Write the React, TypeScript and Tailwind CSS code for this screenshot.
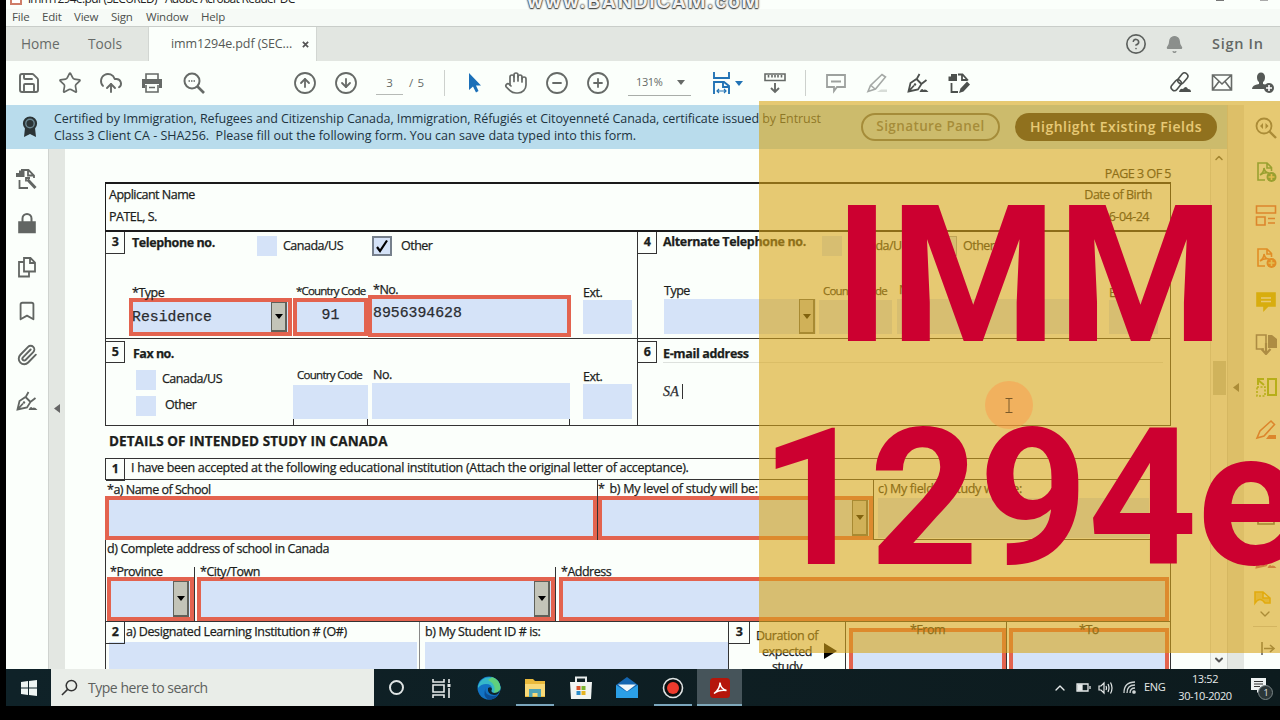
import type { ReactNode } from "react";
import clsx from "clsx";
import {
  Bell,
  Bookmark,
  ChevronDown,
  ChevronUp,
  CircleHelp,
  CircleArrowDown,
  CircleArrowUp,
  CircleMinus,
  CirclePlus,
  CloudUpload,
  Hand,
  Paperclip,
  Save,
  Star,
} from "lucide-react";

type P = { className?: string; children?: ReactNode };

function Svg({ className, children }: P) {
  return (
    <svg
      viewBox="0 0 22 22"
      fill="none"
      stroke="currentColor"
      strokeWidth="1.6"
      className={clsx("size-[22px] shrink-0", className)}
    >
      {children}
    </svg>
  );
}

function PenIcon({ className }: P) {
  return (
    <Svg className={className}>
      <path d="M1.500 19.500 L3.500 11 L9.500 7 L14.500 12 L11 17.500 Z M2 19 L7 13.500 M10 6.500 L12.500 2 M15 11.500 L19.500 8" strokeWidth="1.800" />
      <circle cx="8" cy="12.500" r="1.200" fill="currentColor" stroke="none" />
      <path d="M12.500 20 q2 -5 4 -2 q2 -1.500 5 2 z" fill="currentColor" stroke="none" />
    </Svg>
  );
}

function ConvertIcon({ className }: P) {
  return (
    <Svg className={className}>
      <path d="M0.500 9 V4.500 H3 V2 H9 V9 Z" fill="currentColor" stroke="none" />
      <path d="M10 2.500 H14.500 L20 8.500 M14 3 V8 H19 M3.500 11 V20 H10" strokeWidth="1.800" />
      <path d="M11 21 L12.500 16.500 L19 9.500 L22 12.500 L15.500 19.500 Z" fill="currentColor" stroke="none" />
    </Svg>
  );
}

// export icon of the left rail, the wrench points down to the right
function ExportIcon() {
  return (
    <Svg>
      <path d="M0 9 V5 H3 V2.500 H8.500 V9 Z" fill="currentColor" stroke="none" />
      <path d="M5 2 H12.500 L18 7.500 V10 M12 2 V7.500 H18 M3.500 12 V20 H12" strokeWidth="1.800" />
      <path d="M11.500 11.500 L19.500 20" strokeWidth="3" />
      <path d="M10 13.500 V10 H14" strokeWidth="1.800" />
    </Svg>
  );
}

function DocPlusIcon({ className }: P) {
  return (
    <Svg className={className}>
      <path d="M10 19 H3 V2 H12 L16.500 6.500 V10 M12 2 V7 H16 M5 14 q4 -3 4 -7 q1 5 5 5 q-5 -1 -9 2" />
      <circle cx="16.500" cy="16" r="5" fill="currentColor" stroke="none" />
      <path d="M16.500 13 V19 M13.500 16 H19.500" className="stroke-[#f4e0a0]" />
    </Svg>
  );
}

function Caret({ className }: P) {
  return (
    <svg viewBox="0 0 8 5" className={clsx("h-[5px] w-2 shrink-0", className)} fill="currentColor">
      <path d="M0 0 H8 L4 5 Z" />
    </svg>
  );
}

const MENU = [
  ["File", "w-[30px]"],
  ["Edit", "w-8"],
  ["View", "w-[37px]"],
  ["Sign", "w-[35px]"],
  ["Window", "w-[55px]"],
  ["Help", "w-8"],
];

function TitleBar() {
  return (
    <div className="h-[27px] shrink-0 overflow-hidden border-b border-[#c9cdc9] bg-[#f6faf6]">
      <div className="flex h-[9px] items-end justify-between bg-[#fbfffb]">
        <div className="flex items-center pb-0.5 pl-1">
          <span className="mr-1.5 h-3 w-3 border-2 border-[#cf7d68] bg-white" />
          <span className="text-[12px] leading-[16px] tracking-[-0.68px] whitespace-nowrap text-[#222]">
            imm1294e.pdf (SECURED) - Adobe Acrobat Reader DC
          </span>
        </div>
        <div className="flex items-start gap-9 pr-3 pb-2 text-[#777]">
          <span className="h-px w-2 bg-[#777]" />
          <span className="h-px w-2 bg-[#aaa]" />
        </div>
      </div>
      <div className="flex pl-1.5 text-[11.500px] leading-[16px] text-[#4c504d]">
        {MENU.map(([label, w]) => (
          <span key={label} className={clsx(w, "shrink-0 tracking-[-0.2px]")}>
            {label}
          </span>
        ))}
      </div>
    </div>
  );
}

function TabBar() {
  return (
    <div className="flex h-[34px] shrink-0 items-center bg-[#e2e6e1] text-[13.700px] text-[#676b68]">
      <span className="ml-[15px] w-[67px]">Home</span>
      <span className="w-[60px]">Tools</span>
      <div className="flex h-full w-[169px] items-center border-x border-[#d2d6d2] bg-[#fbfffb] pl-[22px] text-[12.500px] text-[#555956]">
        <span className="w-[131px] tracking-[-0.1px] whitespace-nowrap">imm1294e.pdf (SEC...</span>
        <svg viewBox="0 0 8 8" className="size-[7px] stroke-[#555]" strokeWidth="2">
          <path d="M1 1 L7 7 M7 1 L1 7" />
        </svg>
      </div>
      <CircleHelp className="ml-auto size-[22px] text-[#5c605d]" strokeWidth={1.8} />
      <Bell className="ml-[18px] size-[19px] fill-[#8b8f8c] text-[#8b8f8c]" strokeWidth={1.6} />
      <span className="mr-[15px] ml-7 w-[53px] text-[14.500px] font-semibold tracking-[0.7px] whitespace-nowrap text-[#636764]">Sign In</span>
    </div>
  );
}

function Toolbar() {
  const lu = "size-[24px] -mx-px shrink-0";
  return (
    <div className="flex h-11 shrink-0 items-center bg-[#fbfffb] text-[#666a67]">
      <Save className={clsx(lu, "ml-[11px]")} strokeWidth={1.9} />
      <Star className={clsx(lu, "ml-[18px]")} strokeWidth={1.7} />
      <CloudUpload className={clsx(lu, "ml-[18px]")} strokeWidth={1.9} />
      <Svg className="ml-[19px]">
        <path d="M5 7 V2 H17 V7" />
        <path d="M1 7 H21 V16 H18 V12 H4 V16 H1 Z" fill="currentColor" stroke="none" />
        <path d="M5 13 V20 H17 V13 M8 15.500 H14" />
      </Svg>
      <Svg className="ml-5">
        <circle cx="9" cy="9" r="7.500" strokeWidth="2" />
        <path d="M14 14 L21 21" strokeWidth="2.600" />
        <path d="M5.500 9 H12.500" strokeDasharray="1.500 1" />
      </Svg>
      <CircleArrowUp className={clsx(lu, "ml-[88px]")} strokeWidth={1.8} />
      <CircleArrowDown className={clsx(lu, "ml-[18px]")} strokeWidth={1.8} />
      <span className="ml-[19px] h-6 w-[27px] border-b border-[#b6bab6] text-center text-[11.500px] leading-6">3</span>
      <span className="ml-1.5 w-[17px] text-[11.500px] tracking-[0.7px] whitespace-nowrap">/ 5</span>
      <span className="ml-[18px] h-[26px] w-px bg-[#cdd1cd]" />
      <Svg className="ml-[18px] text-[#1b6fb8]">
        <path d="M6 1 V18 L10 14.500 L13 20.500 L15.500 19 L13 13.500 H18 Z" fill="currentColor" stroke="none" />
      </Svg>
      <Hand className={clsx(lu, "ml-[19px]")} strokeWidth={1.7} />
      <CircleMinus className={clsx(lu, "ml-[18px]")} strokeWidth={1.8} />
      <CirclePlus className={clsx(lu, "ml-[18px]")} strokeWidth={1.8} />
      <div className="ml-[19px] flex h-[25px] w-[63px] items-center border-b border-[#a9ada9] pl-2 text-[11px]">
        <span className="w-[41px] tracking-[-0.4px]">131%</span>
        <Caret />
      </div>
      <Svg className="ml-5 text-[#2273b5]">
        <path d="M3 0 V6 H18 V0 M3 22 V10 H13 L18 14 V22 M12 11 V15 H17" strokeWidth="1.900" />
        <path d="M6 19 H15 M8 17 L6 19 L8 21 M13 17 L15 19 L13 21" strokeWidth="1.200" />
      </Svg>
      <Caret className="ml-0.5 text-[#2273b5]" />
      <Svg className="ml-[21px]">
        <path d="M1 2 H21 V8.500 H1 Z M4.500 3 V5.500 M8 3 V5.500 M11 3 V5.500 M14 3 V5.500 M17.500 3 V5.500" />
        <path d="M11 11 V19 M7 16 L11 20 L15 16" strokeWidth="1.900" />
      </Svg>
      <span className="ml-[19px] h-[26px] w-px bg-[#cdd1cd]" />
      <Svg className="ml-[19px] text-[#9da19e]">
        <path d="M2 3 H20 V15 H12 L9 19 V15 H2 Z M6 9.500 H16" strokeWidth="1.800" />
      </Svg>
      <Svg className="ml-[19px] text-[#a5a9a6]">
        <path d="M2 19.500 L4.500 13.500 L16 2.500 L19.500 5 L9.500 17 Z M5 13.500 L9 17" />
        <path d="M11 20 L15 17.500 H21 V20 Z" fill="currentColor" stroke="none" opacity=".4" />
      </Svg>
      <PenIcon className="ml-[19px] text-[#4c504d]" />
      <ConvertIcon className="ml-[19px] text-[#4c504d]" />
      <Svg className="ml-[199px] text-[#4c504d]">
        <rect x="1" y="10" width="12" height="6.500" rx="3.200" transform="rotate(-50 7 13)" />
        <rect x="8" y="3" width="12" height="6.500" rx="3.200" transform="rotate(-50 14 6.500)" />
        <path d="M10 20 q1 -4 4 -3 q3 -4 5 0 q3 0 3 3 z" fill="currentColor" stroke="none" />
      </Svg>
      <Svg className="ml-5">
        <path d="M1.500 3 H20.500 V18 H1.500 Z L11 12 L20.500 3 M1.500 18 L8 9.500 M20.500 18 L14 9.500" />
      </Svg>
      <Svg className="ml-[19px] text-[#555956]">
        <path d="M5 5 a4 4.500 0 0 1 8 0 q0 4 -2 5 v2 l4 1 v4 H0 q0 -4 7 -5 v-2 q-2 -1 -2 -5" fill="currentColor" stroke="none" />
        <circle cx="17" cy="16" r="5" fill="currentColor" stroke="none" />
        <path d="M17 13 V19 M14 16 H20" stroke="#fff" />
      </Svg>
    </div>
  );
}

function Banner() {
  return (
    <div className="flex h-11 shrink-0 items-center bg-[#b9dcec] text-[#1d333e]">
      <svg viewBox="0 0 16 22" className="ml-4 h-[22px] w-4 shrink-0">
        <path d="M3 12 L2 21 L8 18 L14 21 L13 12 Z" fill="#2b3436" />
        <circle cx="8" cy="7.500" r="6" fill="#6c8791" stroke="#2b3436" strokeWidth="2.200" />
        <circle cx="8" cy="7.500" r="3.500" fill="#2b3436" />
      </svg>
      <div className="ml-4 w-[800px] shrink-0 text-[12.500px] leading-[17.500px] whitespace-pre">
        <p className="tracking-[-0.08px]">
          Certified by Immigration, Refugees and Citizenship Canada, Immigration, Réfugiés et Citoyenneté Canada, certificate issued by Entrust
        </p>
        <p>
          Class 3 Client CA - SHA256.{"  "}Please fill out the following form. You can save data typed into this form.
        </p>
      </div>
      <button className="ml-[7px] h-7 w-[139px] shrink-0 rounded-full border-2 border-[#59686d] pb-0.5 text-[13.500px] leading-[22px] font-semibold tracking-[0.4px] whitespace-nowrap text-[#59686d]">
        Signature Panel
      </button>
      <button className="ml-[15px] h-7 w-[202px] shrink-0 rounded-full bg-[#24242a] pb-0.5 text-[14px] font-semibold tracking-[0.5px] whitespace-nowrap text-white">
        Highlight Existing Fields
      </button>
    </div>
  );
}

function LeftRail() {
  return (
    <div className="flex w-[42px] shrink-0 flex-col items-center gap-[22px] bg-[#fbfffb] pt-[19px] text-[#626663]">
      <ExportIcon />
      <Svg>
        <path d="M3 10 H19 V20.500 H3 Z" fill="currentColor" />
        <path d="M6.500 10 V6.500 a4.500 4.500 0 0 1 9 0 V10" strokeWidth="2" />
      </Svg>
      <Svg>
        <path d="M8 2 H14.500 L19 6.500 V15.500 H8 Z M14 2 V7 H19 M8 6 H3 V20.500 H13 V16" strokeWidth="1.800" />
      </Svg>
      <Bookmark className="size-[22px]" strokeWidth={2} />
      <Paperclip className="size-[22px]" strokeWidth={2.1} />
      <PenIcon className="mt-0.5" />
    </div>
  );
}

function Num({ children, className }: P) {
  return (
    <div className={clsx("h-[22px] w-[19px] shrink-0 border-r border-b border-[#333] text-center text-[12.500px] leading-[20px] font-bold", className)}>
      {children}
    </div>
  );
}

function Field({ className, children, required, select }: P & { required?: boolean; select?: boolean }) {
  return (
    <div
      className={clsx(
        "flex shrink-0 items-center overflow-hidden bg-[#d5e3f8] font-['Liberation_Mono',monospace] text-[14.800px] tracking-normal whitespace-nowrap text-[#2a2c30]",
        required && "border-4 border-[#e3634f]",
        className,
      )}
    >
      {children}
      {select && (
        <span className="mr-px ml-auto flex h-full w-4 shrink-0 items-center justify-center border border-r-2 border-b-2 border-[#5f615a] bg-[#c3c4b8]">
          <Caret className="text-black" />
        </span>
      )}
    </div>
  );
}

function Check({ checked, className }: P & { checked?: boolean }) {
  return (
    <span className={clsx("flex size-5 shrink-0 items-center justify-center bg-[#d5e3f8]", checked && "border-2 border-[#76808c]", className)}>
      {checked && (
        <svg viewBox="0 0 14 14" className="size-3.5" fill="none" stroke="#000" strokeWidth="2.200">
          <path d="M2 8 L5 12 L12 1.500" />
        </svg>
      )}
    </span>
  );
}

function Telephone() {
  return (
    <div className="flex h-[107px] border-r border-b border-[#333]">
      <div className="flex w-[532px] shrink-0 flex-col border-l border-[#333]">
        <div className="flex h-6">
          <Num>3</Num>
          <b className="ml-[7px] w-[125px] leading-[21px] tracking-[-0.4px]">Telephone no.</b>
          <Check className="mt-1" />
          <span className="ml-1.5 w-[89px] leading-[27px]">Canada/US</span>
          <Check checked className="mt-1" />
          <span className="ml-[9px] leading-[27px]">Other</span>
        </div>
        <div className="mt-auto flex items-end pl-[23px]">
          <div className="mb-[2px] w-[164px]">
            <p className="pl-[3px] leading-[11px]">*Type</p>
            <Field required select className="h-[38px] w-[163px]">
              <span className="-ml-px">Residence</span>
            </Field>
          </div>
          <div className="mb-[2px] w-[75px]">
            <p className="pl-[3px] text-[11.500px] leading-[14px] tracking-[-0.8px]">*Country Code</p>
            <Field required className="h-[38px] justify-center">
              <span className="mb-[3px]">91</span>
            </Field>
          </div>
          <div className="mb-px w-[215px]">
            <p className="pl-[5px] leading-[11px]">*No.</p>
            <Field required className="h-[42px] w-[203px]">
              <span className="mb-1.5 ml-px">8956394628</span>
            </Field>
          </div>
          <div className="mb-1 w-[49px]">
            <p className="leading-[14px]">Ext.</p>
            <Field className="h-[34px]" />
          </div>
        </div>
      </div>
      <div className="flex w-[533px] shrink-0 flex-col border-l border-[#333]">
        <div className="flex h-6">
          <Num className="w-5">4</Num>
          <b className="ml-1.5 w-[159px] leading-[20px] tracking-[-0.34px]">Alternate Telephone no.</b>
          <Check className="mt-1" />
          <span className="ml-1.5 w-[89px] leading-[27px]">Canada/US</span>
          <Check className="mt-1 border border-[#98a4b4]" />
          <span className="ml-1.5 leading-[27px]">Other</span>
        </div>
        <div className="mt-auto mb-1 flex items-end pl-[26px]">
          <div className="w-[155px]">
            <p className="leading-[16px]">Type</p>
            <Field select className="h-[35px] w-[152px]" />
          </div>
          <div className="w-[78px]">
            <p className="pl-1 text-[11.500px] leading-[18px] tracking-[-0.8px]">Country Code</p>
            <Field className="h-[34px] w-[73px]" />
          </div>
          <div className="w-[212px]">
            <p className="pl-0.5 leading-[18px]">No.</p>
            <Field className="h-[35px] w-[198px]" />
          </div>
          <div className="w-[49px]">
            <p className="leading-[15px]">Ext.</p>
            <Field className="h-[34px]" />
          </div>
        </div>
      </div>
    </div>
  );
}

function FaxEmail() {
  return (
    <div className="flex h-[87px] border-r border-b border-[#333]">
      <div className="flex w-[532px] shrink-0 border-l border-[#333]">
        <Num className="mt-0.5 border-t">5</Num>
        <div className="w-[168px]">
          <b className="block pl-2 leading-[29px]">Fax no.</b>
          <div className="mt-0.5 flex pl-[11px]">
            <Check />
            <span className="ml-1.5 leading-[17px]">Canada/US</span>
          </div>
          <div className="mt-1.5 flex pl-[11px]">
            <Check />
            <span className="ml-[9px] leading-[18px]">Other</span>
          </div>
        </div>
        <div className="flex items-end">
          <div className="w-[79px]">
            <p className="pl-1 text-[11.500px] leading-[20px] tracking-[-0.7px]">Country Code</p>
            <Field className="h-[34px] w-[75px]" />
            <div className="h-[6px] w-[75px] border-x border-[#333]" />
          </div>
          <div className="w-[211px]">
            <p className="pl-px leading-[16px]">No.</p>
            <Field className="h-[36px] w-[198px]" />
            <div className="h-[6px] w-[198px] border-r border-[#333]" />
          </div>
          <div className="mb-1.5 w-[49px]">
            <p className="leading-[15px]">Ext.</p>
            <Field className="h-[35px]" />
          </div>
        </div>
      </div>
      <div className="flex w-[533px] shrink-0 border-l border-[#333]">
        <Num className="mt-0.5 w-5 border-t">6</Num>
        <div className="ml-1.5 w-[500px]">
          <b className="block h-[24px] border-b border-[#dde1dd] leading-[29px] tracking-[-0.35px]">E-mail address</b>
          <div className="mt-[21px] flex w-[20px] border-r border-[#333] font-['Liberation_Serif',serif] text-[14px] leading-[15px] tracking-[0.3px] text-[#2a2c30] italic">
            SA
          </div>
        </div>
      </div>
    </div>
  );
}

function Study() {
  return (
    <>
      <h2 className="h-8 pl-1 text-[13.500px] leading-[31px] font-bold tracking-[0.07px]">DETAILS OF INTENDED STUDY IN CANADA</h2>
      <div className="flex h-[22px] border border-[#333]">
        <Num className="h-[21px] leading-[17px]">1</Num>
        <span className="ml-1.5 leading-[17px] tracking-[-0.3px]">
          I have been accepted at the following educational institution (Attach the original letter of acceptance).
        </span>
      </div>
      <div className="flex h-[60px] border-r border-[#333]">
        <div className="w-[492px] shrink-0">
          <p className="h-4 pl-0.5 leading-[19px]">*a) Name of School</p>
          <Field required className="h-11" />
        </div>
        <div className="w-[276px] shrink-0 border-l border-[#333]">
          <p className="h-4 leading-[17px]">
            *<span className="ml-[5px] tracking-[-0.25px]">b) My level of study will be:</span>
          </p>
          <Field required select className="h-11" />
        </div>
        <div className="grow border-b border-l border-[#333]">
          <p className="h-[18px] pl-1 leading-[17px] tracking-[-0.3px]">c) My field of study will be:</p>
          <Field className="ml-1 h-10 w-[271px]" />
        </div>
      </div>
      <div className="h-[82px] border-r border-b border-l border-[#333]">
        <p className="h-[27px] pl-px leading-[17px] tracking-[-0.4px]">d) Complete address of school in Canada</p>
        <div className="flex h-[54px]">
          <div className="w-[89px] shrink-0 border-r border-[#333] pl-px">
            <p className="h-[10px] pl-[3px] leading-[10px]">*Province</p>
            <Field required select className="h-11" />
          </div>
          <div className="w-[361px] shrink-0 border-r border-[#333] pl-0.5">
            <p className="h-[10px] pl-[3px] leading-[10px]">*City/Town</p>
            <Field required select className="h-11" />
          </div>
          <div className="w-[613px] shrink-0 pl-[3px]">
            <p className="h-[10px] pl-0.5 leading-[10px]">*Address</p>
            <Field required className="h-11" />
          </div>
        </div>
      </div>
      <div className="flex h-[47px] overflow-hidden border-r border-l border-[#333]">
        <div className="w-[314px] shrink-0 border-r border-[#888]">
          <div className="flex h-5">
            <Num>2</Num>
            <span className="ml-px leading-[19px] tracking-[-0.38px]">a) Designated Learning Institution # (O#)</span>
          </div>
          <Field className="ml-[3px] h-[27px] w-[308px]" />
        </div>
        <div className="w-[309px] shrink-0 border-r border-[#333] pl-[5px]">
          <p className="h-5 leading-[19px] tracking-[-0.38px]">b) My Student ID # is:</p>
          <Field className="h-[27px]" />
        </div>
        <div className="flex w-[117px] shrink-0 border-r border-[#333]">
          <Num className="h-[21px] w-[21px]">3</Num>
          <p className="mt-[6px] ml-[3px] w-[68px] shrink-0 text-center leading-[15.500px] tracking-[-0.4px]">
            Duration of
            <br />
            expected
            <br />
            study
          </p>
          <svg viewBox="0 0 13 16" className="mt-[21px] ml-[3px] h-4 w-[13px] shrink-0">
            <path d="M0 0 L13 8 L0 16 Z" />
          </svg>
        </div>
        <div className="w-[161px] shrink-0 border-r border-[#333] pl-[3px]">
          <p className="h-1.5 text-center leading-[16px]">*From</p>
          <Field required className="h-[50px]" />
        </div>
        <div className="grow pr-px pl-0.5">
          <p className="h-1.5 text-center leading-[16px]">*To</p>
          <Field required className="h-[50px]" />
        </div>
      </div>
    </>
  );
}

function Document() {
  return (
    <div className="w-[1145px] shrink-0 overflow-hidden bg-[#fbfffb] pl-10 text-[12.500px] tracking-[-0.5px] whitespace-nowrap text-[#1c1e1c] [-webkit-text-stroke:0.25px]">
      <div className="w-[1066px]">
        <p className="h-[33px] pt-[17px] text-right leading-[16px]">PAGE 3 OF 5</p>
        <div className="flex h-[50px] justify-between border-x border-y-2 border-[#1a1a1a] px-[3px] leading-[22px]">
          <div>
            <p>Applicant Name</p>
            <p>PATEL, S.</p>
          </div>
          <div className="mr-[15px] text-right">
            <p>Date of Birth</p>
            <p className="pr-[3px]">1986-04-24</p>
          </div>
        </div>
        <Telephone />
        <FaxEmail />
        <Study />
      </div>
    </div>
  );
}

function ScrollBar() {
  return (
    <div className="flex w-[17px] shrink-0 flex-col items-center justify-between border-l border-[#d9ddd9] bg-[#f4f8f4] py-[3px] text-[#555]">
      <ChevronUp className="size-3" strokeWidth={3} />
      <span className="mt-[52px] h-[34px] w-[13px] bg-[#c4c8c4]" />
      <ChevronDown className="mt-[114px] size-3" strokeWidth={4} />
    </div>
  );
}

function RightRail() {
  return (
    <div className="flex w-9 shrink-0 flex-col items-end gap-[21px] bg-[#fbfffb] pt-3 pr-[3px]">
      <Svg className="text-[#666]">
        <circle cx="9" cy="9" r="7.500" strokeWidth="1.800" />
        <path d="M14.500 14.500 L21 21" strokeWidth="2.400" />
        <path d="M8 6 L5 9 L8 12 Z M10.500 6 L13.500 9 L10.500 12 Z" fill="currentColor" stroke="none" />
      </Svg>
      <DocPlusIcon className="mt-px text-[#3d9a55]" />
      <Svg className="text-[#e2574c]">
        <path d="M1.500 2 H20.500 V9 H1.500 Z M1.500 13 H10 V21 H1.500 Z M13 14.500 H20 M13 19 H20" />
      </Svg>
      <DocPlusIcon className="text-[#ee6a3a]" />
      <Svg className="text-[#d6b800]">
        <path d="M2 3 H20 V16 H13 L9 20 V16 H2 Z" fill="currentColor" />
        <path d="M6 8 H16 M6 11.500 H16" stroke="#fff" />
      </Svg>
      <Svg className="text-[#6b6684]">
        <path d="M9 16 H1.500 V2 H11 V10" />
        <path d="M13 2 H17 L22 6 V15 H13 Z" fill="currentColor" stroke="none" />
        <path d="M11 10 V20 M6.500 16 L11 21 L15.500 16" strokeWidth="2.200" />
      </Svg>
      <Svg className="text-[#86bc1c]">
        <path d="M13 3 H21 V19 H13 Z M3 4 L9 9 M3 9 V3 H9" strokeWidth="2" />
        <path d="M2 11 H10 V20 H2 Z" strokeDasharray="2 1.500" />
      </Svg>
      <Svg className="text-[#e2574c]">
        <path d="M2 19 L5 12 L16 2 L19.500 5.500 L9 17 Z" />
        <path d="M11 20 L14 16 H21 V20 Z" fill="currentColor" stroke="none" />
      </Svg>
      <Svg className="text-[#666]" />
      <Svg className="text-[#555]">
        <path d="M3 5 H19 V19 H3 Z" />
      </Svg>
      <PenIcon className="text-[#c0507a]" />
      <div className="-mt-[3px] flex flex-col items-center">
        <Svg className="text-[#f0b400]">
          <path d="M1 4 H9 L16 10 V15 H11 Q6 8 1 15 Z M9 4 V10 H16" fill="currentColor" fillOpacity=".6" />
        </Svg>
        <ChevronDown className="-mt-1 size-4 text-[#666]" />
        <span className="mt-1 h-px w-6 bg-[#ccc]" />
        <Svg className="mt-2.5 text-[#666]">
          <path d="M8 5 V18 M10 11.500 H20 M16 8 L20 11.500 L16 15" />
        </Svg>
      </div>
    </div>
  );
}

function Taskbar() {
  return (
    <div className="flex h-[37px] shrink-0 items-center bg-gradient-to-r from-[#0f2228] to-[#0d1b1e] text-[#e6eaea]">
      <div className="flex w-[45px] justify-center">
        <svg viewBox="0 0 16 16" className="size-4" fill="#eef4f2">
          <path d="M0 2 L7 1 V7.500 H0 Z M8 1 L16 0 V7.500 H8 Z M0 8.500 H7 V15 L0 14 Z M8 8.500 H16 V16 L8 15 Z" />
        </svg>
      </div>
      <div className="flex h-full w-[323px] items-center bg-[#e9ede8] pl-2.5 text-[#5d615e]">
        <svg viewBox="0 0 18 18" className="size-[17px]" fill="none" stroke="#333" strokeWidth="1.600">
          <circle cx="11" cy="7" r="5.500" />
          <path d="M7 11 L1 17" />
        </svg>
        <span className="ml-2.5 text-[14px] tracking-[-0.48px]">Type here to search</span>
      </div>
      <div className="flex h-full [&>div]:flex [&>div]:items-center [&>div]:justify-center">
        <div className="w-11">
          <span className="size-[15px] rounded-full border-[2.500px] border-[#dfe4e4]" />
        </div>
        <div className="w-[46px]">
          <Svg className="size-[18px]">
            <path d="M3 2 V5 H14 V2 M3 8 H14 V15 H3 Z M3 21 V18 H14 V21 M19 2 V6 M19 11 V21" />
            <path d="M17.500 7 H20.500 V10 H17.500 Z" fill="currentColor" stroke="none" />
          </Svg>
        </div>
        <div className="w-[50px]">
          <svg viewBox="0 0 24 24" className="size-6">
            <circle cx="12" cy="12" r="11.500" fill="#1273c4" />
            <path d="M1 10 A11.500 11.500 0 0 1 23.500 11 Q24 17 17 17 Q13 16 15 13 Q15 8 9 8 Q4 8 1 12 Z" fill="#35b8c9" />
            <path d="M15 1 A11.500 11.500 0 0 1 23.500 12 Q22 17 17 17 Q20 9 11 4 Z" fill="#5fd07d" />
            <path d="M9 11 Q6 19 16 20 Q20 20 22 18 Q18 24 11 23.500 Q5 20 9 11" fill="#0c4f96" />
            <path d="M15 13 Q13 16 17 17 Q21 17 23 14 Q22 19 17 19 Q10 18 11 12 Q14 10 15 13" fill="#10242b" />
          </svg>
        </div>
        <div className="ml-0.5 w-[38px] border-b-2 border-[#7aa6bd] pt-0.5">
          <svg viewBox="0 0 22 20" className="h-5 w-[22px]">
            <path d="M1 1 H9 L11 3 H21 V19 H1 Z" fill="#e9b93b" />
            <path d="M1 6 H21 V18 H1 Z" fill="#f8d978" />
            <path d="M5 19 V11 H17 V19 H13.500 V15 H8.500 V19 Z" fill="#4fa3b5" />
          </svg>
        </div>
        <div className="ml-1 w-[46px]">
          <svg viewBox="0 0 24 24" className="size-6">
            <path d="M7 6 V1.500 H17 V6" fill="none" stroke="#e8ecec" strokeWidth="2" />
            <path d="M1 6 H23 L22 23 H2 Z" fill="#f1f4f2" />
            <path d="M7.500 10 H11.500 V14 H7.500 Z" fill="#d9532c" />
            <path d="M12.500 10 H16.500 V14 H12.500 Z" fill="#7cb42f" />
            <path d="M7.500 15 H11.500 V19 H7.500 Z" fill="#2a8cc9" />
            <path d="M12.500 15 H16.500 V19 H12.500 Z" fill="#e6b422" />
          </svg>
        </div>
        <div className="w-[46px]">
          <svg viewBox="0 0 24 22" className="h-[22px] w-6">
            <path d="M1 8 L12 0 L23 8 V21 H1 Z" fill="#1566b0" />
            <path d="M1 8 L12 15 L23 8 V21 H1 Z" fill="#2b9fe6" />
            <path d="M3 7.500 H21 L12 14.500 Z" fill="#f2f8fa" />
          </svg>
        </div>
        <div className="ml-1 w-[38px] border-b-2 border-[#7aa6bd] pt-0.5">
          <svg viewBox="0 0 22 22" className="size-[22px]">
            <circle cx="11" cy="11" r="9.500" fill="#0b0f10" stroke="#e0e4e4" strokeWidth="1.600" />
            <circle cx="11" cy="11" r="6" fill="#ef3b2d" />
          </svg>
        </div>
        <div className="ml-[5px] w-[45px] border-b-2 border-[#7fa8ba] bg-[#46545a] pt-0.5">
          <svg viewBox="0 0 20 20" className="size-5">
            <rect width="20" height="20" rx="3.500" fill="#b5160b" />
            <path d="M4 15.500 Q10 11 10 4.500 Q10.500 11 16.500 12.500 Q9 11.500 4 15.500 Z" fill="none" stroke="#fff" strokeWidth="1.500" />
          </svg>
        </div>
      </div>
      <div className="mr-[7px] ml-auto flex items-center text-[12px]">
        <ChevronUp className="size-4" strokeWidth={2} />
        <svg viewBox="0 0 15 9" className="ml-2 h-[9px] w-[15px]" fill="none" stroke="#e6eaea" strokeWidth="1.300">
          <path d="M1 1 H12 V8 H1 Z M14 3 V6" />
          <path d="M2 2 H6 V7 H2 Z" fill="#e6eaea" />
        </svg>
        <svg viewBox="0 0 16 14" className="ml-[7px] h-3.5 w-4" fill="none" stroke="#e6eaea" strokeWidth="1.200">
          <path d="M1 5 H3 L6 2 V12 L3 9 H1 Z M8 5 Q9 7 8 9 M10 3 Q12 7 10 11 M12.500 1.500 Q15.500 7 12.500 12.500" />
        </svg>
        <svg viewBox="0 0 13 13" className="ml-[9px] size-[13px]" fill="none" stroke="#cdd3d3" strokeWidth="1.300">
          <path d="M1 12 Q1 1 12 1 M4 12 Q4 4 12 4 M7 12 Q7 7 12 7" />
          <circle cx="11" cy="11" r="1.200" fill="#e6eaea" />
        </svg>
        <span className="ml-2 w-6 text-[11px] tracking-[-0.3px]">ENG</span>
        <div className="ml-2 w-[58px] text-center text-[11px] leading-[16.500px] tracking-[-0.4px]">
          <p>13:52</p>
          <p>30-10-2020</p>
        </div>
        <svg viewBox="0 0 22 24" className="ml-[17px] h-6 w-[22px]">
          <path d="M0 2 H15 V14 H9 L6 17 V14 H0 Z" fill="#eef2f2" />
          <path d="M3 5.500 H12 M3 8 H12 M3 10.500 H9" stroke="#333" />
          <circle cx="14.500" cy="16.500" r="7" fill="#2c3638" stroke="#7b8688" />
          <text x="12.500" y="20" fontSize="9" fill="#e6eaea">
            1
          </text>
        </svg>
      </div>
    </div>
  );
}

function Splitter({ className, children }: P) {
  return <div className={clsx("flex w-[17px] shrink-0 justify-center border-l border-[#cfd3cf] bg-[#e3e7e2] text-[#666]", className)}>{children}</div>;
}

const collapse = (
  <svg viewBox="0 0 6 9" className="h-[9px] w-1.5" fill="currentColor">
    <path d="M6 0 V9 L0 4.500 Z" />
  </svg>
);

export default function App() {
  return (
    <div className="relative flex h-[720px] w-[1280px] flex-col overflow-hidden bg-black pl-1.5 font-['Open_Sans','Noto_Sans',sans-serif]">
      <TitleBar />
      <TabBar />
      <Toolbar />
      <div className="flex h-[564px] shrink-0">
        <div className="flex w-[1221px] shrink-0 flex-col">
          <Banner />
          <div className="flex h-[520px]">
            <LeftRail />
            <Splitter className="pt-[255px]">{collapse}</Splitter>
            <Document />
            <ScrollBar />
          </div>
        </div>
        <Splitter className="pt-[278px]">{collapse}</Splitter>
        <RightRail />
      </div>
      <Taskbar />

      {/* screen recorder watermark */}
      <p className="absolute top-[-9px] left-[527px] w-[240px] font-['Inter',sans-serif] text-[19px] leading-[22px] font-bold tracking-[1.75px] whitespace-nowrap text-[#f2f2f2] [text-shadow:0_0_2px_#333,0_0_2px_#333,0_1px_1px_#555]">
        www.BANDICAM.coM
      </p>

      {/* video caption */}
      <div className="absolute top-[101px] left-[759px] h-[552px] w-[521px] bg-[#d9a518]/60" />
      <div className="absolute top-[381px] left-[985px] flex size-12 items-center justify-center rounded-full bg-[#ff9548]/45">
        <svg viewBox="0 0 8 15" className="h-[15px] w-2" fill="none" stroke="#7a5a2a">
          <path d="M0.500 0.500 H7.500 M4 0.500 V14.500 M0.500 14.500 H7.500" />
        </svg>
      </div>
      <div className="absolute top-[165px] left-[759px] w-[521px] overflow-hidden font-['Roboto',sans-serif] text-[191px] leading-[223px] font-bold whitespace-nowrap text-[#cc0030]">
        <p className="pl-[75px]">IMM</p>
        <p className="pl-px tracking-[-0.3px]">1294e</p>
      </div>
    </div>
  );
}
